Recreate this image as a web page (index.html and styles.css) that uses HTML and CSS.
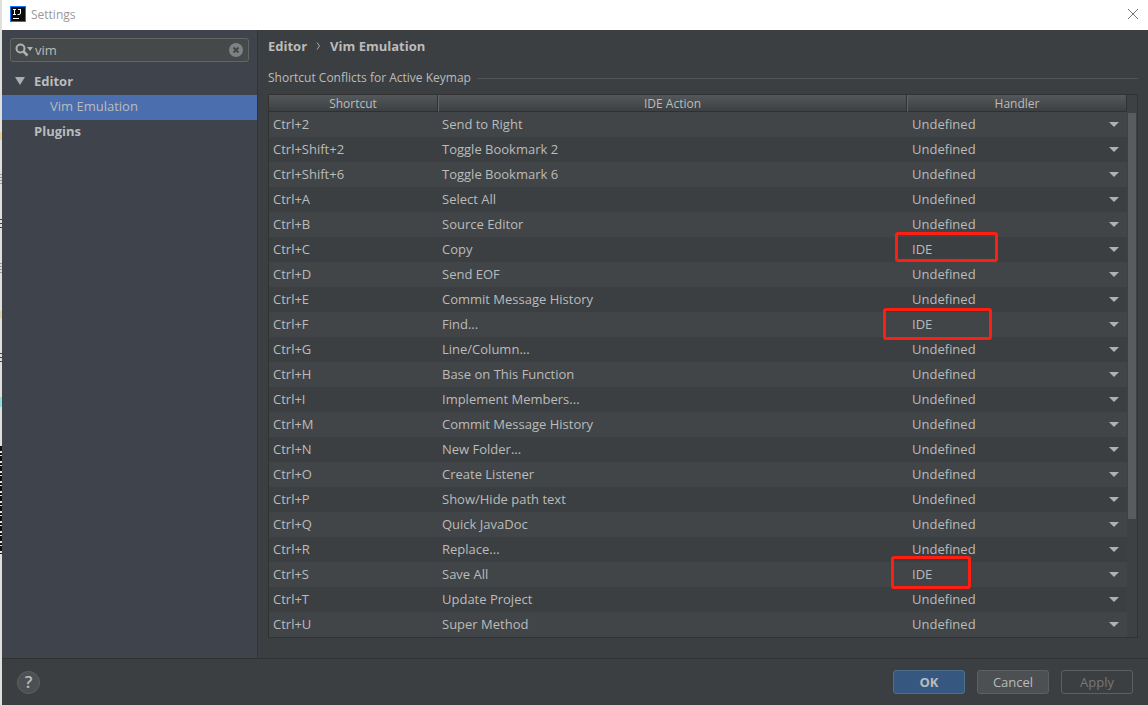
FILE: index.html
```
<!DOCTYPE html>
<html lang="en">
<head>
    <meta charset="UTF-8">
    <meta name="viewport" content="width=device-width, initial-scale=1.0">
    <title>Settings</title>
    <link rel="stylesheet" href="styles.css">
</head>
<body>
    <div class="desktop"></div>

    <div class="window">
        <header class="titlebar">
            <svg class="logo" width="16" height="16" viewBox="0 0 16 16" fill="none">
                <rect width="16" height="16" fill="#087cfa"/>
                <rect x="1" y="1" width="14" height="14" fill="#0b0b0d"/>
                <path d="M3 3.5h3M4.5 3.5v5M3 8.500h3M8 3.500h3M10.500 3.500v3.500q0 1.500-1.500 1.500h-1.500M3 12.500h6" stroke="#fff"/>
            </svg>
            <span class="title">Settings</span>
            <button class="close" aria-label="Close">
                <svg width="12" height="12" viewBox="0 0 12 12" stroke="#777" fill="none"><path d="M1 1l10 10M11 1L1 11"/></svg>
            </button>
        </header>

        <div class="content">
            <aside class="sidebar">
                <div class="search">
                    <svg width="19" height="14" viewBox="0 0 19 14" fill="none">
                        <circle cx="5.500" cy="5.500" r="4" stroke="#afb1b3" stroke-width="2"/>
                        <path d="M8.500 8.500l4 4" stroke="#afb1b3" stroke-width="2.500"/>
                        <path d="M12 4h6l-3 4z" fill="#afb1b3"/>
                    </svg>
                    <input type="text" value="vim" aria-label="Search settings">
                    <button class="clear" aria-label="Clear">
                        <svg width="14" height="14" viewBox="0 0 14 14"><circle cx="7" cy="7" r="7" fill="#7f8284"/><path d="M4.500 4.500l5 5M9.500 4.500l-5 5" stroke="#434647" stroke-width="1.800"/></svg>
                    </button>
                </div>
                <nav class="tree">
                    <a href="#editor" class="group">
                        <svg width="10" height="8" viewBox="0 0 10 8"><path d="M0 0h10L5 8z" fill="#adadad"/></svg>
                        Editor
                    </a>
                    <a href="#vim" class="leaf selected">Vim Emulation</a>
                    <a href="#plugins" class="group plain">Plugins</a>
                </nav>
            </aside>

            <main class="main">
                <h1 class="breadcrumb">
                    <span>Editor</span>
                    <svg width="5" height="8" viewBox="0 0 5 8" fill="none" stroke="#aaa"><path d="M1 0.500L3.500 4 1 7.500"/></svg>
                    <span>Vim Emulation</span>
                </h1>
                <h2 class="section">Shortcut Conflicts for Active Keymap</h2>

                <div class="panel">
                    <table>
                        <thead>
                            <tr><th class="col-shortcut">Shortcut</th><th>IDE Action</th><th class="col-handler">Handler</th></tr>
                        </thead>
                        <tbody>
                            <tr><td>Ctrl+2</td><td>Send to Right</td><td class="handler"><select aria-label="Handler for Ctrl+2"><option>Undefined</option><option>IDE</option><option>Vim</option></select></td></tr>
                            <tr><td>Ctrl+Shift+2</td><td>Toggle Bookmark 2</td><td class="handler"><select aria-label="Handler for Ctrl+Shift+2"><option>Undefined</option><option>IDE</option><option>Vim</option></select></td></tr>
                            <tr><td>Ctrl+Shift+6</td><td>Toggle Bookmark 6</td><td class="handler"><select aria-label="Handler for Ctrl+Shift+6"><option>Undefined</option><option>IDE</option><option>Vim</option></select></td></tr>
                            <tr><td>Ctrl+A</td><td>Select All</td><td class="handler"><select aria-label="Handler for Ctrl+A"><option>Undefined</option><option>IDE</option><option>Vim</option></select></td></tr>
                            <tr><td>Ctrl+B</td><td>Source Editor</td><td class="handler"><select aria-label="Handler for Ctrl+B"><option>Undefined</option><option>IDE</option><option>Vim</option></select></td></tr>
                            <tr><td>Ctrl+C</td><td>Copy</td><td class="handler"><select aria-label="Handler for Ctrl+C"><option>IDE</option><option>Undefined</option><option>Vim</option></select><span class="mark mark-copy"></span></td></tr>
                            <tr><td>Ctrl+D</td><td>Send EOF</td><td class="handler"><select aria-label="Handler for Ctrl+D"><option>Undefined</option><option>IDE</option><option>Vim</option></select></td></tr>
                            <tr><td>Ctrl+E</td><td>Commit Message History</td><td class="handler"><select aria-label="Handler for Ctrl+E"><option>Undefined</option><option>IDE</option><option>Vim</option></select></td></tr>
                            <tr><td>Ctrl+F</td><td>Find...</td><td class="handler"><select aria-label="Handler for Ctrl+F"><option>IDE</option><option>Undefined</option><option>Vim</option></select><span class="mark mark-find"></span></td></tr>
                            <tr><td>Ctrl+G</td><td>Line/Column...</td><td class="handler"><select aria-label="Handler for Ctrl+G"><option>Undefined</option><option>IDE</option><option>Vim</option></select></td></tr>
                            <tr><td>Ctrl+H</td><td>Base on This Function</td><td class="handler"><select aria-label="Handler for Ctrl+H"><option>Undefined</option><option>IDE</option><option>Vim</option></select></td></tr>
                            <tr><td>Ctrl+I</td><td>Implement Members...</td><td class="handler"><select aria-label="Handler for Ctrl+I"><option>Undefined</option><option>IDE</option><option>Vim</option></select></td></tr>
                            <tr><td>Ctrl+M</td><td>Commit Message History</td><td class="handler"><select aria-label="Handler for Ctrl+M"><option>Undefined</option><option>IDE</option><option>Vim</option></select></td></tr>
                            <tr><td>Ctrl+N</td><td>New Folder...</td><td class="handler"><select aria-label="Handler for Ctrl+N"><option>Undefined</option><option>IDE</option><option>Vim</option></select></td></tr>
                            <tr><td>Ctrl+O</td><td>Create Listener</td><td class="handler"><select aria-label="Handler for Ctrl+O"><option>Undefined</option><option>IDE</option><option>Vim</option></select></td></tr>
                            <tr><td>Ctrl+P</td><td>Show/Hide path text</td><td class="handler"><select aria-label="Handler for Ctrl+P"><option>Undefined</option><option>IDE</option><option>Vim</option></select></td></tr>
                            <tr><td>Ctrl+Q</td><td>Quick JavaDoc</td><td class="handler"><select aria-label="Handler for Ctrl+Q"><option>Undefined</option><option>IDE</option><option>Vim</option></select></td></tr>
                            <tr><td>Ctrl+R</td><td>Replace...</td><td class="handler"><select aria-label="Handler for Ctrl+R"><option>Undefined</option><option>IDE</option><option>Vim</option></select></td></tr>
                            <tr><td>Ctrl+S</td><td>Save All</td><td class="handler"><select aria-label="Handler for Ctrl+S"><option>IDE</option><option>Undefined</option><option>Vim</option></select><span class="mark mark-save"></span></td></tr>
                            <tr><td>Ctrl+T</td><td>Update Project</td><td class="handler"><select aria-label="Handler for Ctrl+T"><option>Undefined</option><option>IDE</option><option>Vim</option></select></td></tr>
                            <tr><td>Ctrl+U</td><td>Super Method</td><td class="handler"><select aria-label="Handler for Ctrl+U"><option>Undefined</option><option>IDE</option><option>Vim</option></select></td></tr>
                        </tbody>
                    </table>
                    <div class="scrollbar"><div class="thumb"></div></div>
                </div>
            </main>
        </div>

        <footer class="footer">
            <button class="help" aria-label="Help">?</button>
            <button class="btn primary">OK</button>
            <button class="btn">Cancel</button>
            <button class="btn" disabled>Apply</button>
        </footer>
    </div>
</body>
</html>
```
FILE: styles.css
```
* {
    margin: 0;
    padding: 0;
    box-sizing: border-box;
}

body {
    display: flex;
    height: 100vh;
    overflow: hidden;
    background: #3c3f41;
    color: #bbbbbb;
    font-family: "Open Sans", "Noto Sans", sans-serif;
    font-size: 13px;
    line-height: 20px;
}

button, input, select {
    font: inherit;
    color: inherit;
    background: none;
    border: none;
    outline: none;
}

a {
    color: inherit;
    text-decoration: none;
}

svg {
    display: block;
    flex: none;
}

/* sliver of the editor behind the window */
.desktop {
    width: 2px;
    background:
        repeating-linear-gradient(#111 0 5px, #ddd 5px 7px, #111 7px 9px, #ddd 9px 10px) 0 446px / 2px 108px no-repeat,
        linear-gradient(#8de0e0, #8de0e0) 0 397px / 2px 10px no-repeat,
        repeating-linear-gradient(#444 0 1px, #ddd 1px 4px) 0 353px / 2px 11px no-repeat,
        linear-gradient(#e0d29a, #e0d29a) 0 311px / 2px 7px no-repeat,
        repeating-linear-gradient(#999 0 1px, #ddd 1px 3px) 0 263px / 2px 11px no-repeat,
        repeating-linear-gradient(#444 0 1px, #ddd 1px 4px) 0 219px / 2px 11px no-repeat,
        repeating-linear-gradient(#999 0 1px, #ddd 1px 3px) 0 174px / 2px 11px no-repeat,
        linear-gradient(#e0d29a, #e0d29a) 0 132px / 2px 8px no-repeat,
        #dfe0dc;
}

.window {
    flex: 1;
    min-width: 0;
    display: flex;
    flex-direction: column;
}

.titlebar {
    display: flex;
    align-items: center;
    height: 30px;
    padding: 0 9px 2px 8px;
    background: #ffffff;
    color: #999999;
    font-size: 12px;
}

.title {
    flex: 1;
    margin-left: 5px;
    padding-top: 2px;
}

.content {
    flex: 1;
    display: flex;
    min-height: 0;
}

.sidebar {
    width: 256px;
    padding-top: 8px;
    background: #3f434c;
    border-right: 1px solid #323232;
}

.search {
    display: flex;
    align-items: center;
    height: 24px;
    margin: 0 8px;
    padding: 0 5px 0 4px;
    background: #45494a;
    border: 1px solid #646464;
    border-radius: 3px;
}

.search input {
    flex: 1;
    min-width: 0;
    margin-left: 1px;
}

.tree {
    margin-top: 8px;
}

.tree a {
    display: flex;
    align-items: center;
    height: 25px;
    padding-bottom: 3px;
}

.tree .group {
    gap: 9px;
    padding-left: 13px;
    font-weight: bold;
}

.tree .plain {
    padding-left: 32px;
}

.leaf {
    padding-left: 48px;
}

.selected {
    background: #4b6eaf;
}

.main {
    flex: 1;
    min-width: 0;
    display: flex;
    flex-direction: column;
    padding: 6px 10px 20px 10px;
}

.breadcrumb {
    display: flex;
    align-items: center;
    gap: 9px;
    font-size: 13px;
}

.section {
    display: flex;
    align-items: center;
    gap: 6px;
    margin: 12px 0 6px;
    font-size: 12px;
    font-weight: normal;
}

.section::after {
    content: "";
    flex: 1;
    height: 1px;
    background: #515355;
}

.panel {
    flex: 1;
    min-height: 0;
    display: flex;
    overflow: hidden;
    border: 1px solid #323232;
}

table {
    flex: 1;
    align-self: flex-start;
    table-layout: fixed;
    border-collapse: separate;
    border-spacing: 0;
}

th {
    height: 17px;
    padding-top: 1px;
    background: linear-gradient(#55585a, #3d4042);
    border-bottom: 1px solid #2e3032;
    border-right: 1px solid #2e3032;
    font-size: 12px;
    line-height: 15px;
    font-weight: normal;
}

.col-shortcut {
    width: 169px;
}

.col-handler {
    width: 220px;
}

th + th {
    border-left: 1px solid #626567;
}

td {
    height: 25px;
    padding: 0 0 2px 4px;
    line-height: 22px;
    white-space: nowrap;
}

tbody tr:nth-child(odd) {
    background: #414547;
}

.handler {
    position: relative;
    padding-left: 5px;
}

.handler select {
    display: block;
    width: 100%;
    height: 22px;
    appearance: none;
}

/* drop-down arrow */
.handler::after {
    content: "";
    position: absolute;
    top: 10px;
    right: 8px;
    border: 5px solid transparent;
    border-top-color: #afb1b3;
    border-bottom: none;
    pointer-events: none;
}

.mark {
    position: absolute;
    z-index: 1;
    border: 3px solid #ff1f12;
    border-radius: 3px;
    pointer-events: none;
}

.mark-copy {
    left: -12px;
    top: -5px;
    width: 103px;
    height: 30px;
}

.mark-find {
    left: -24px;
    top: -4px;
    width: 109px;
    height: 32px;
}

.mark-save {
    left: -16px;
    top: -6px;
    width: 80px;
    height: 33px;
}

.scrollbar {
    width: 10px;
    padding: 18px 1px 0;
    background: #3e4143;
}

.thumb {
    height: 406px;
    max-height: 100%;
    background: #595c5d;
}

.footer {
    display: flex;
    align-items: center;
    gap: 12px;
    height: 47px;
    padding: 0 15px;
    border-top: 1px solid #323232;
}

.help {
    width: 23px;
    height: 23px;
    margin-right: auto;
    background: #4c5052;
    border: 1px solid #5e6162;
    border-radius: 50%;
    font-size: 17px;
    line-height: 20px;
    font-weight: 600;
}

.btn {
    width: 72px;
    height: 24px;
    background: #4c5052;
    border: 1px solid #5e6060;
    border-radius: 3px;
}

.primary {
    background: #365880;
    border-color: #4c708c;
    font-weight: bold;
}

.btn:disabled {
    background: none;
    color: #777777;
}
```
